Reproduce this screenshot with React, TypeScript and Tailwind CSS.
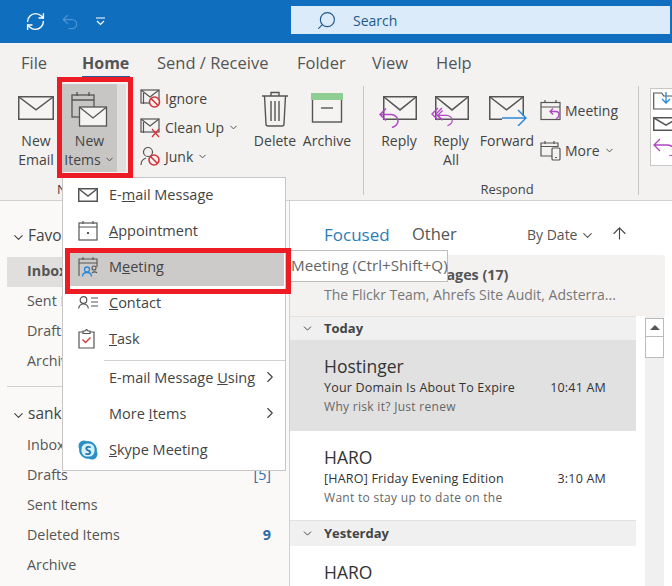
import { ChevronDown, ChevronRight, RefreshCw, Undo2, Search, ArrowUp } from "lucide-react";
import type { ReactNode } from "react";

const ink = "#555555";
const purple = "#b146c2";

function Envelope({ w = 36, h = 24, fill = "#fff" }: { w?: number; h?: number; fill?: string }) {
  return (
    <svg width={w} height={h} viewBox={`0 0 ${w} ${h}`} fill="none" stroke={ink} strokeWidth="1.5">
      <rect x=".75" y=".75" width={w - 1.5} height={h - 1.5} fill={fill} />
      <path d={`M1 1 L${w / 2} ${h * 0.58} L${w - 1} 1`} />
    </svg>
  );
}

function CalendarMail() {
  return (
    <svg width="38" height="36" viewBox="0 0 38 36" fill="none" stroke={ink} strokeWidth="1.3">
      <rect x="1" y="3" width="22" height="22" />
      <path d="M1 8h22M6 0v4M18 0v4" />
      <rect x="8.5" y="15" width="27" height="19" fill="#f5f4f3" />
      <path d="M9 15.5 L22 26 L35 15.5" />
    </svg>
  );
}

function IgnoreIcon() {
  return (
    <svg width="21" height="20" viewBox="0 0 21 20" fill="none" stroke={ink} strokeWidth="1.2">
      <rect x="1" y="1" width="18" height="13" />
      <path d="M3.5 4v11M1 1l9 7 9-7" />
      <circle cx="14.5" cy="13" r="5" stroke="#d13438" strokeWidth="1.6" fill="#f3f2f1" />
      <path d="M11 9.5l7 7" stroke="#d13438" strokeWidth="1.6" />
    </svg>
  );
}

function CleanUpIcon() {
  return (
    <svg width="21" height="20" viewBox="0 0 21 20" fill="none" stroke={ink} strokeWidth="1.2">
      <rect x="1" y="1" width="18" height="13" />
      <path d="M3.5 4v11M1 1l9 7 9-7" />
      <path d="M12 11l7 8M19 11l-7 8" stroke="#d13438" strokeWidth="1.3" />
    </svg>
  );
}

function JunkIcon() {
  return (
    <svg width="21" height="20" viewBox="0 0 21 20" fill="none" stroke={ink} strokeWidth="1.2">
      <circle cx="8" cy="6" r="4.5" />
      <path d="M1 19c0-4 2-6 5-7" />
      <circle cx="14" cy="14" r="5" stroke="#d13438" strokeWidth="1.6" />
      <path d="M10.5 10.5l7 7" stroke="#d13438" strokeWidth="1.6" />
    </svg>
  );
}

function TrashIcon() {
  return (
    <svg width="28" height="36" viewBox="0 0 28 36" fill="none" stroke={ink} strokeWidth="1.4">
      <path d="M1 5h26M10 5V1.5h8V5M3.5 5l1.5 28a2 2 0 0 0 2 2h14a2 2 0 0 0 2-2L24.500 5" />
      <path d="M10 10v20M14 10v20M18 10v20" />
    </svg>
  );
}

function ArchiveIcon() {
  return (
    <svg width="32" height="30" viewBox="0 0 32 30" fill="none" stroke={ink} strokeWidth="1.4">
      <rect x="1.500" y="6" width="29" height="23" fill="#f5f4f3" />
      <rect x="0" y="0" width="32" height="7" fill="#8fce92" stroke="none" />
      <path d="M10 15h12" />
    </svg>
  );
}

function ReplyArrow({ color = purple }: { color?: string }) {
  return <path d="M7 1L1 7l6 6M1 7h11c4 0 7 3 7 6.500S16 19 13 20" stroke={color} strokeWidth="1.5" fill="none" />;
}

function ReplyIcon() {
  return (
    <svg width="40" height="34" viewBox="0 0 40 34" fill="none">
      <g transform="translate(4 0)"><Envelope w={34} h={24} fill="#f5f4f3" /></g>
      <svg x="0" y="11" width="20" height="23" viewBox="0 0 20 22" overflow="visible"><ReplyArrow /></svg>
    </svg>
  );
}

function ReplyAllIcon() {
  return (
    <svg width="40" height="34" viewBox="0 0 40 34" fill="none">
      <g transform="translate(4 0)"><Envelope w={34} h={24} fill="#f5f4f3" /></g>
      <svg x="6" y="11" width="16" height="23" viewBox="0 0 20 22" overflow="visible"><ReplyArrow /></svg>
      <path d="M7 12L1 18l6 6M11 12L5 18l6 6" stroke={purple} strokeWidth="1.400" />
    </svg>
  );
}

function ForwardIcon() {
  return (
    <svg width="40" height="30" viewBox="0 0 40 30" fill="none">
      <g transform="translate(2 0)"><Envelope w={35} h={24} fill="#f5f4f3" /></g>
      <rect x="15" y="20" width="25" height="4" fill="#f3f2f1" />
      <path d="M15 22h24M31 14l8 8-8 8" stroke="#2b88d8" strokeWidth="1.500" />
    </svg>
  );
}

function MeetingReplyIcon() {
  return (
    <svg width="21" height="21" viewBox="0 0 21 21" fill="none" stroke={ink} strokeWidth="1.2">
      <rect x="1" y="2.500" width="19" height="17" />
      <path d="M1 7h19M5 0v3M16 0v3" />
      <path d="M13 8.500l-3 3 3 3M10 11.500h6c2 0 3 1.500 3 3s-1.500 3.500-3 4" stroke={purple} strokeWidth="1.300" />
    </svg>
  );
}

function MoreIcon() {
  return (
    <svg width="21" height="21" viewBox="0 0 21 21" fill="none" stroke={ink} strokeWidth="1.2">
      <path d="M12 16H1V3h17v4M1 6.500h17M5 1v3M14 1v3" />
      <rect x="12" y="8" width="8" height="12" rx="1" fill="#f3f2f1" />
      <path d="M15 17.500h2" />
    </svg>
  );
}

function CalendarIcon() {
  return (
    <svg width="20" height="20" viewBox="0 0 20 20" fill="none" stroke={ink} strokeWidth="1.2">
      <rect x="1" y="2" width="18" height="17" />
      <path d="M1 6h18M5 0v3M15 0v3" />
      <rect x="9" y="11" width="2" height="2" fill={ink} stroke="none" />
    </svg>
  );
}

function MeetingIcon() {
  return (
    <svg width="20" height="20" viewBox="0 0 20 20" fill="none" stroke={ink} strokeWidth="1.1">
      <path d="M1 19V2h18v8M1 6h18M5 0v3M15 0v3" />
      <circle cx="9" cy="12.500" r="2.500" stroke="#2b88d8" strokeWidth="1.300" />
      <path d="M4.500 19.500c0-2.500 2-4 4.500-4s4.500 1.500 4.500 4" stroke="#2b88d8" strokeWidth="1.300" />
      <circle cx="16" cy="11" r="2" />
      <path d="M14 16c1-1.500 4-1.500 5 0" />
    </svg>
  );
}

function ContactIcon() {
  return (
    <svg width="20" height="14" viewBox="0 0 20 14" fill="none" stroke={ink} strokeWidth="1.2">
      <circle cx="5.500" cy="4" r="3.300" />
      <path d="M.6 12.500c.5-3 2.500-4.500 4.900-4.500s4.400 1.500 4.900 4.500M13 2h7M13 6h7M13 10h7" />
    </svg>
  );
}

function TaskIcon() {
  return (
    <svg width="17" height="20" viewBox="0 0 17 20" fill="none" stroke={ink} strokeWidth="1.2">
      <path d="M5 3H1v16h15V3h-4" />
      <path d="M5 4.500V2h2l1.500-1.500L10 2h2v2.500z" />
      <path d="M4.500 10.500l3 3 5-5" stroke="#d13438" strokeWidth="1.300" />
    </svg>
  );
}

function SkypeIcon() {
  return (
    <svg width="20" height="20" viewBox="0 0 20 20">
      <path d="M6 .5a5.500 5.500 0 0 0-5.500 5.500c0 1 .3 1.900.7 2.700A9 9 0 0 0 11 18.800c.800.400 1.800.700 3 .700a5.500 5.500 0 0 0 5.500-5.500c0-1-.3-1.900-.7-2.700A9 9 0 0 0 8.700 1.200C7.900.800 7 .5 6 .5z" fill="#2a8fc7" />
      <rect x="3.500" y="3.500" width="13" height="13" rx="5.500" fill="#d8eef8" />
      <text x="10" y="14.500" textAnchor="middle" fontSize="12" fontWeight="700" fontFamily="Open Sans, sans-serif" fill="#1b78ab">S</text>
    </svg>
  );
}

function BigButton({ icon, top = 12, lines, className = "", width }: { icon: ReactNode; top?: number; lines: ReactNode[]; className?: string; width: string }) {
  return (
    <div className={`flex flex-col items-center ${width} ${className}`}>
      <div className="h-[47px] flex justify-center" style={{ paddingTop: top }}>{icon}</div>
      {lines.map((l, i) => (
        <div key={i} className="leading-[19px] whitespace-nowrap flex items-center">{l}</div>
      ))}
    </div>
  );
}

function SmallButton({ icon, label, chevron, height }: { icon: ReactNode; label: string; chevron?: boolean; height: string }) {
  return (
    <div className={`flex items-center ${height}`}>
      <div className="w-[25px] shrink-0">{icon}</div>
      <span className="whitespace-nowrap">{label}</span>
      {chevron && <ChevronDown size={11} strokeWidth={2} className="ml-[4px]" />}
    </div>
  );
}

function MenuItem({ icon, children, arrow, active }: { icon?: ReactNode; children: ReactNode; arrow?: boolean; active?: boolean }) {
  return (
    <div className={`h-[36px] flex items-center ${active ? "bg-[#cdcbc9] ml-[7px] mr-[1px]" : ""}`}>
      <div className={`${active ? "w-[39px] pl-[8px]" : "w-[46px] pl-[15px]"} shrink-0 flex pb-[3px]`}>{icon}</div>
      <span className="whitespace-nowrap flex-1 pb-[2px]">{children}</span>
      {arrow && <ChevronRight size={18} strokeWidth={1.5} className="mr-[6px] mb-[4px]" />}
    </div>
  );
}

function FolderRow({ label, count, bold, active }: { label: string; count?: string; bold?: boolean; active?: boolean }) {
  return (
    <div className={`h-[30px] flex items-center pl-[20px] pr-[18px] ml-[7px] pb-[3px] ${active ? "bg-[#e1dfdd] font-bold" : ""}`}>
      <span className="flex-1 whitespace-nowrap">{label}</span>
      {count && <span className={`text-[#2b6ca8] ${bold ? "font-bold" : ""}`}>{count}</span>}
    </div>
  );
}

function DateHeader({ label, height }: { label: string; height: string }) {
  return (
    <div className={`${height} bg-[#f0f0f0] border-t border-[#e1e1e1] flex items-center text-[13px] font-bold text-[#444]`}>
      <div className="w-[34px] pl-[11px]"><ChevronDown size={13} strokeWidth={1.8} /></div>
      {label}
    </div>
  );
}

function MailRow({ from, subject, time, preview, active, height }: { from: string; subject: string; time?: string; preview?: string; active?: boolean; height: string }) {
  return (
    <div className={`${height} pl-[34px] pr-[30px] pt-[15px] ${active ? "bg-[#e1e1e1]" : ""}`}>
      <div className="text-[17.500px] leading-[23px] text-[#333]">{from}</div>
      <div className="flex justify-between text-[12.500px] leading-[19px] text-[#333] tracking-[.2px]">
        <span>{subject}</span>
        <span>{time}</span>
      </div>
      <div className="text-[12px] leading-[19px] text-[#666] tracking-[.3px]">{preview}</div>
    </div>
  );
}

export default function App() {
  return (
    <div className="relative w-[672px] h-[586px] overflow-hidden bg-white font-['Open_Sans','Noto_Sans',sans-serif] text-[14px] text-[#444]">
      {/* title bar */}
      <div className="h-[43px] bg-[#106ebe] flex items-start">
        <div className="w-[291px] h-[43px] flex items-center text-white">
          <RefreshCw size={21} strokeWidth={1.600} className="ml-[25px]" />
          <Undo2 size={20} strokeWidth={1.500} className="ml-[14px] text-[#4b95d3]" />
          <svg width="9" height="9" viewBox="0 0 9 9" fill="none" stroke="#fff" strokeWidth="1.200" className="ml-[16px]">
            <path d="M0 1h9M1 4l3.500 3.500L8 4" />
          </svg>
        </div>
        <div className="mt-[6px] w-[379px] h-[28px] bg-[#dcebf9] flex items-center text-[14px] text-[#1f5a8e]">
          <Search size={21} strokeWidth={1.300} className="ml-[25px] -scale-x-100" />
          <span className="ml-[16px]">Search</span>
        </div>
      </div>

      {/* ribbon tabs */}
      <div className="h-[40px] bg-[#f3f2f1] flex items-center pl-[21px] text-[16.500px] text-[#555]">
        <div className="w-[61px]">File</div>
        <div className="w-[75px] relative font-bold text-[16px]">
          Home
          <div className="absolute left-0 top-[25px] w-[48px] h-[2px] bg-[#2b579a]" />
        </div>
        <div className="w-[140px]">Send / Receive</div>
        <div className="w-[75px]">Folder</div>
        <div className="w-[64px]">View</div>
        <div>Help</div>
      </div>

      {/* ribbon */}
      <div className="h-[118px] bg-[#f3f2f1] border-b border-[#d2d0ce] flex text-[14px] pt-[1px]">
        <div className="w-[363px] shrink-0 flex flex-col pl-[15px]">
          <div className="h-[96px] flex">
            <BigButton width="w-[42px]" icon={<Envelope fill="#f5f4f3" />} lines={["New", "Email"]} />
            <div className="ml-[5px] w-[55px] h-[88px] bg-[#c8c6c4]">
              <BigButton width="w-[55px]" top={8} icon={<CalendarMail />} lines={["New", <>Items<ChevronDown size={11} strokeWidth={2} className="ml-[3px]" /></>]} />
            </div>
            <div className="w-[9px] h-[88px] bg-[#e1dfdd]" />
            <div className="ml-[14px] w-[110px] flex flex-col">
              <SmallButton height="h-[29px]" icon={<IgnoreIcon />} label="Ignore" />
              <SmallButton height="h-[29px]" icon={<CleanUpIcon />} label="Clean Up" chevron />
              <SmallButton height="h-[28px]" icon={<JunkIcon />} label="Junk" chevron />
            </div>
            <BigButton width="w-[50px]" top={7} icon={<TrashIcon />} lines={["Delete"]} />
            <BigButton width="w-[54px]" top={9} icon={<ArchiveIcon />} lines={["Archive"]} />
          </div>
          <div className="w-[111px] h-[21px] flex items-center justify-center text-[13px]">New</div>
        </div>
        <div className="w-px shrink-0 h-[109px] mt-[2px] bg-[#c8c6c4]" />
        <div className="w-[274px] shrink-0 flex flex-col pl-[12px]">
          <div className="h-[96px] flex">
            <BigButton width="w-[46px]" icon={<ReplyIcon />} lines={["Reply"]} />
            <BigButton width="w-[50px]" className="ml-[4px]" icon={<ReplyAllIcon />} lines={["Reply", "All"]} />
            <BigButton width="w-[58px]" className="ml-[2px]" icon={<ForwardIcon />} lines={["Forward"]} />
            <div className="ml-[4px] flex flex-col pt-[6px]">
              <SmallButton height="h-[40px]" icon={<MeetingReplyIcon />} label="Meeting" />
              <SmallButton height="h-[40px]" icon={<MoreIcon />} label="More" chevron />
            </div>
          </div>
          <div className="h-[21px] flex items-center justify-center text-[13px]">Respond</div>
        </div>
        <div className="w-px shrink-0 h-[109px] mt-[2px] bg-[#c8c6c4]" />
        <div className="ml-[11px] mt-[4px] w-[30px] shrink-0 h-[78px] bg-white border border-[#c8c6c4] flex flex-col gap-[7px] pl-[2px] pt-[3px]">
          <svg width="26" height="18" viewBox="0 0 26 18" fill="none" stroke={ink} strokeWidth="1.200">
            <path d="M.7 17V1h8l2 3h14v13z" />
            <path d="M13 0v10M9 7l4 4 4-4" stroke="#2b88d8" strokeWidth="1.300" />
          </svg>
          <Envelope w={26} h={14} fill="#fff" />
          <svg width="26" height="18" viewBox="0 0 26 18" fill="none" stroke={purple} strokeWidth="1.300">
            <path d="M7 1L1 7l6 6M1 7h13c5 0 7 3 7 6s-2 5-5 5" />
          </svg>
        </div>
      </div>

      {/* body */}
      <div className="flex h-[385px]">
        <div className="w-[290px] shrink-0 bg-[#faf9f8] border-r border-[#d2d0ce] text-[14.300px] text-[#555]">
          <div className="h-[56px] flex items-end pl-[11px] pb-[10px] text-[15.500px] text-[#444]">
            <ChevronDown size={15} strokeWidth={1.800} className="mb-[2px]" />
            <span className="ml-[2px]">Favorites</span>
          </div>
          <FolderRow label="Inbox" active />
          <FolderRow label="Sent Items" />
          <FolderRow label="Drafts" />
          <FolderRow label="Archive" />
          <div className="mt-[9px] mx-[7px] h-px bg-[#d2d0ce]" />
          <div className="h-[44px] flex items-end pl-[11px] pb-[6px] text-[15.500px] text-[#444]">
            <ChevronDown size={15} strokeWidth={1.800} className="mb-[2px]" />
            <span className="ml-[2px]">sank</span>
          </div>
          <FolderRow label="Inbox" />
          <FolderRow label="Drafts" count="[5]" />
          <FolderRow label="Sent Items" />
          <FolderRow label="Deleted Items" count="9" bold />
          <FolderRow label="Archive" />
        </div>

        <div className="flex-1 pr-[7px] flex flex-col min-w-0">
          <div className="h-[54px] shrink-0 flex items-start pl-[34px] pt-[21px] text-[16.500px]">
            <span className="text-[#2b7cb8] text-[17px] w-[88px]">Focused</span>
            <span className="text-[#555] w-[115px]">Other</span>
            <span className="text-[14px] leading-[26px] flex items-center text-[#555]">
              By Date
              <ChevronDown size={15} strokeWidth={1.800} className="ml-[3px]" />
            </span>
            <ArrowUp size={19} strokeWidth={1.400} className="ml-[15px] mt-[2px] text-[#444]" />
          </div>
          <div className="h-[61px] shrink-0 bg-[#f3f2f1] rounded-t-[3px] pl-[34px] pt-[10px]">
            <div className="text-[14.300px] leading-[20px] font-bold text-[#555]">Other: New messages (17)</div>
            <div className="text-[14px] leading-[20px] text-[#777] whitespace-nowrap">The Flickr Team, Ahrefs Site Audit, Adsterra...</div>
          </div>
          <div className="flex flex-1 min-h-0 overflow-hidden">
            <div className="w-[346px] shrink-0">
              <DateHeader label="Today" height="h-[24px]" />
              <MailRow active height="h-[91px]" from="Hostinger" subject="Your Domain Is About To Expire" time="10:41 AM" preview="Why risk it? Just renew" />
              <MailRow height="h-[89px]" from="HARO" subject="[HARO] Friday Evening Edition" time="3:10 AM" preview="Want to stay up to date on the" />
              <DateHeader label="Yesterday" height="h-[26px]" />
              <MailRow height="h-[60px]" from="HARO" subject="" />
            </div>
            <div className="ml-[9px] w-[19px] bg-[#f0f0f0] pt-[2px] flex flex-col">
              <div className="h-[19px] bg-white border border-[#bbb] flex items-center justify-center">
                <div className="w-0 h-0 border-x-[5px] border-x-transparent border-b-[5px] border-b-[#555]" />
              </div>
              <div className="h-[21px] bg-white border border-t-0 border-[#bbb]" />
            </div>
          </div>
        </div>
      </div>

      {/* new items dropdown */}
      <div className="absolute left-[62px] top-[177px] w-[224px] h-[294px] bg-white border border-[#c8c6c4] text-[14.500px] text-[#444]">
        <MenuItem icon={<Envelope w={20} h={14} />}>E-<u>m</u>ail Message</MenuItem>
        <MenuItem icon={<CalendarIcon />}><u>A</u>ppointment</MenuItem>
        <MenuItem active icon={<MeetingIcon />}>M<u>e</u>eting</MenuItem>
        <MenuItem icon={<ContactIcon />}><u>C</u>ontact</MenuItem>
        <MenuItem icon={<TaskIcon />}><u>T</u>ask</MenuItem>
        <div className="ml-[41px] mt-[2px] h-px bg-[#d2d0ce]" />
        <MenuItem arrow>E-mail Message <u>U</u>sing</MenuItem>
        <MenuItem arrow>More <u>I</u>tems</MenuItem>
        <MenuItem icon={<SkypeIcon />}><u>S</u>kype Meeting</MenuItem>
      </div>

      {/* tooltip */}
      <div className="absolute left-[290px] top-[250px] w-[158px] h-[32px] bg-white border border-[#bdbdbd] flex items-center pb-[1px] text-[15.200px] text-[#666] whitespace-nowrap">
        Meeting (Ctrl+Shift+Q)
      </div>

      {/* callouts */}
      <div className="absolute left-[57px] top-[77px] w-[76px] h-[101px] border-[5px] border-[#ed1c24]" />
      <div className="absolute left-[65px] top-[248px] w-[226px] h-[46px] border-[5px] border-[#ed1c24]" />
    </div>
  );
}
